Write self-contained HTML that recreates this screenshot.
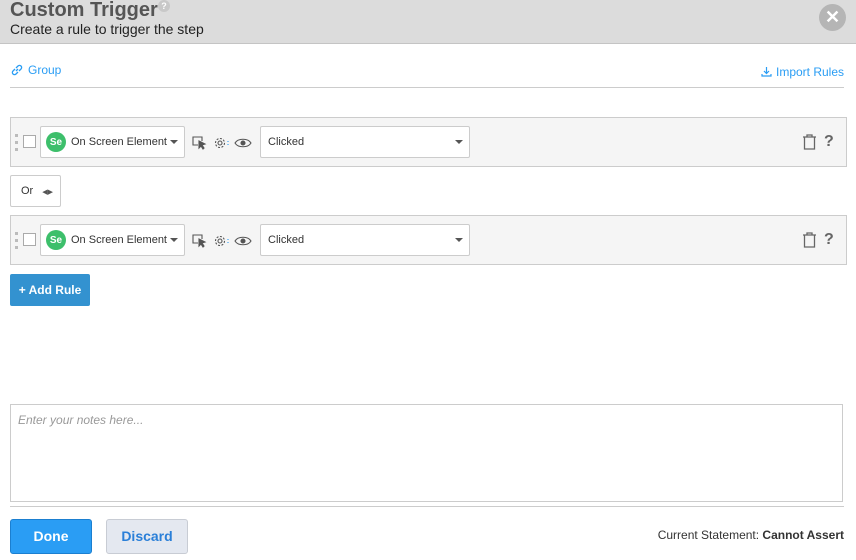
<!DOCTYPE html>
<html><head><style>
*{box-sizing:border-box;margin:0;padding:0}
body{width:856px;height:560px;background:#fff;font-family:"Liberation Sans",Arial,sans-serif;position:relative;overflow:hidden;color:#333}
.a{position:absolute}
.hdr{left:0;top:0;width:856px;height:44px;background:#dcdcdc;border-bottom:1px solid #c4c4c4}
.row{left:10px;width:837px;height:50px;background:#f5f5f5;border:1px solid #ccc}
.sel{background:#fff;border:1px solid #ccc;border-radius:2px;height:32px;font-size:11px;color:#333}
.caret{width:0;height:0;border-left:4px solid transparent;border-right:4px solid transparent;border-top:4px solid #555}
</style></head><body>
<div class="a hdr"></div>
<div class="a" style="left:10px;top:-1px;font-size:20px;font-weight:bold;color:#555">Custom Trigger</div>
<div class="a" style="left:158px;top:0;width:12px;height:12px;border-radius:6px;background:#c8c8c8;color:#fff;font-size:9px;text-align:center;line-height:12px;font-weight:bold">?</div>
<div class="a" style="left:10px;top:21px;font-size:14px;color:#222">Create a rule to trigger the step</div>
<div class="a" style="left:819px;top:4px;width:27px;height:27px;border-radius:14px;background:#b5b5b5;color:#fff;font-size:18px;font-weight:bold;text-align:center;line-height:27px">✕</div>

<svg class="a" style="left:10px;top:63px" width="14" height="14" viewBox="0 0 14 14" fill="none" stroke="#2a9df4" stroke-width="1.3"><path d="M6 8l2-2M5 6L3 8a2 2 0 0 0 3 3l2-2M9 8l2-2a2 2 0 0 0-3-3L6 5"/></svg>
<div class="a" style="left:28px;top:63px;font-size:12px;color:#2a9df4">Group</div>
<svg class="a" style="left:761px;top:66px" width="11" height="11" viewBox="0 0 11 11" fill="none" stroke="#2a9df4" stroke-width="1.2"><path d="M5.5 1v6M3 5l2.5 2.5L8 5M1 8v2h9V8"/></svg>
<div class="a" style="left:776px;top:65px;font-size:12px;color:#2a9df4">Import Rules</div>
<div class="a" style="left:10px;top:87px;width:834px;height:1px;background:#ccc"></div>

<div class="a row" style="top:117px"></div>
<div class="a row" style="top:215px"></div>

<div class="a" style="left:10px;top:175px;width:51px;height:32px;border:1px solid #ccc;border-radius:2px;background:#fff;font-size:11px;color:#333;padding:9px 0 0 10px">Or <span style="font-size:7px;margin-left:6px;color:#555">◀▶</span></div>

<div class="a" style="left:10px;top:274px;width:80px;height:32px;background:#3392d0;border-radius:2px;color:#fff;font-size:12px;font-weight:bold;text-align:center;line-height:32px">+ Add Rule</div>

<div class="a" style="left:10px;top:404px;width:833px;height:98px;border:1px solid #ccc;font-size:12px;font-style:italic;color:#999;padding:8px 7px">Enter your notes here...</div>
<div class="a" style="left:10px;top:506px;width:834px;height:1px;background:#ccc"></div>

<div class="a" style="left:10px;top:519px;width:82px;height:35px;background:#2a9df4;border:1px solid #1b7fd0;border-radius:3px;color:#fff;font-size:14px;font-weight:bold;text-align:center;line-height:33px">Done</div>
<div class="a" style="left:106px;top:519px;width:82px;height:35px;background:#e4e8f0;border:1px solid #c8ccd4;border-radius:3px;color:#2a7fd8;font-size:14px;font-weight:bold;text-align:center;line-height:33px">Discard</div>
<div class="a" style="right:12px;top:528px;font-size:12px;color:#333">Current Statement: <b>Cannot Assert</b></div>

<script>
function row(t){
var h='';
h+='<div class="a" style="left:15px;top:'+(t+17)+'px;width:3px;height:17px;border-left:3px dotted #bbb"></div>';
h+='<div class="a" style="left:23px;top:'+(t+18)+'px;width:13px;height:13px;border:1px solid #aaa;background:#fff"></div>';
h+='<div class="a sel" style="left:40px;top:'+(t+9)+'px;width:145px"></div>';
h+='<div class="a" style="left:46px;top:'+(t+15)+'px;width:20px;height:20px;border-radius:10px;background:#3dbf6b;color:#fff;font-size:10px;font-weight:bold;text-align:center;line-height:21px">Se</div>';
h+='<div class="a" style="left:71px;top:'+(t+19)+'px;font-size:11px;color:#333">On Screen Element</div>';
h+='<div class="a caret" style="left:170px;top:'+(t+23)+'px"></div>';
h+='<svg class="a" style="left:192px;top:'+(t+19)+'px" width="16" height="14" viewBox="0 0 16 14" fill="none" stroke="#555" stroke-width="1.1"><path d="M6 9H1V1h9v4"/><path d="M7 5l6 3-3 1 2 3-1 1-2-3-2 2z" fill="#555"/></svg>';
h+='<svg class="a" style="left:213px;top:'+(t+19)+'px" width="18" height="14" viewBox="0 0 18 14" fill="none" stroke="#555" stroke-width="1.1"><circle cx="7" cy="7" r="2"/><circle cx="7" cy="7" r="4.5" stroke-dasharray="2 1.5"/><path d="M15 5v1M15 8v1" stroke="#2a9df4"/></svg>';
h+='<svg class="a" style="left:234px;top:'+(t+20)+'px" width="18" height="12" viewBox="0 0 18 12" fill="none" stroke="#555" stroke-width="1.1"><path d="M1 6C4 1 14 1 17 6C14 11 4 11 1 6z"/><circle cx="9" cy="6" r="2" fill="#555"/></svg>';
h+='<div class="a sel" style="left:260px;top:'+(t+9)+'px;width:210px;padding:9px 0 0 7px">Clicked</div>';
h+='<div class="a caret" style="left:455px;top:'+(t+23)+'px"></div>';
h+='<svg class="a" style="left:802px;top:'+(t+17)+'px" width="15" height="16" viewBox="0 0 15 16" fill="none" stroke="#666" stroke-width="1.3"><path d="M1 3h13M5 3V1h5v2M2.5 3v12h10V3"/></svg>';
h+='<div class="a" style="left:824px;top:'+(t+16)+'px;font-size:16px;font-weight:bold;color:#666">?</div>';
document.body.insertAdjacentHTML('beforeend',h);
}
row(117);row(215);
</script>
</body></html>
